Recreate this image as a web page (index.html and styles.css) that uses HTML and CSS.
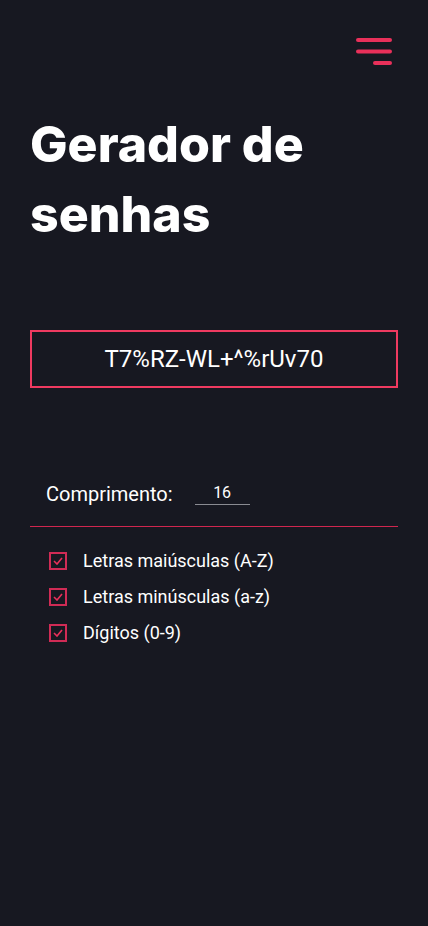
FILE: index.html
```html
<!DOCTYPE html>
<html lang="pt">
<head>
<meta charset="utf-8">
<title>Gerador de senhas</title>
<link rel="stylesheet" href="styles.css">
</head>
<body>
<div class="page">
  <header class="topbar">
    <button class="menu" aria-label="Menu">
      <svg width="36" height="27" viewBox="0 0 36 27">
        <line x1="2" y1="2" x2="34" y2="2" stroke="#e9305a" stroke-width="4" stroke-linecap="round"/>
        <line x1="2" y1="13.5" x2="34" y2="13.5" stroke="#e9305a" stroke-width="4" stroke-linecap="round"/>
        <line x1="19" y1="25" x2="34" y2="25" stroke="#e9305a" stroke-width="4" stroke-linecap="round"/>
      </svg>
    </button>
  </header>
  <h1 class="title">Gerador de senhas</h1>
  <div class="password">T7%RZ-WL+^%rUv70</div>
  <div class="length">
    <label class="length-label" for="len">Comprimento:</label>
    <input class="length-input" id="len" type="text" value="16">
  </div>
  <div class="divider"></div>
  <ul class="options">
    <li class="option"><span class="check"><svg width="10" height="8" viewBox="0 0 10 8"><path d="M1 4 L4 7 L9 1" fill="none" stroke="#e9305a" stroke-width="1.6"/></svg></span>Letras maiúsculas (A-Z)</li>
    <li class="option"><span class="check"><svg width="10" height="8" viewBox="0 0 10 8"><path d="M1 4 L4 7 L9 1" fill="none" stroke="#e9305a" stroke-width="1.6"/></svg></span>Letras minúsculas (a-z)</li>
    <li class="option"><span class="check"><svg width="10" height="8" viewBox="0 0 10 8"><path d="M1 4 L4 7 L9 1" fill="none" stroke="#e9305a" stroke-width="1.6"/></svg></span>Dígitos (0-9)</li>
  </ul>
</div>
</body>
</html>
```
FILE: styles.css
```css
html, body {
  margin: 0;
  padding: 0;
  background: #171821;
  color: #ffffff;
  font-family: Roboto, "Liberation Sans", sans-serif;
}
.page {
  width: 428px;
  min-height: 926px;
  box-sizing: border-box;
  padding: 0 30px;
}
.topbar {
  display: flex;
  justify-content: flex-end;
  padding-top: 38px;
  padding-right: 6px;
}
.menu {
  background: none;
  border: 0;
  padding: 0;
  width: 36px;
  height: 27px;
  display: block;
}
.menu svg { display: block; }
.title {
  margin: 44px 0 0 0;
  font-family: Inter, sans-serif;
  font-weight: 800;
  font-size: 50px;
  line-height: 70px;
  width: 320px;
  letter-spacing: 0;
}
.password {
  margin-top: 81px;
  height: 58px;
  box-sizing: border-box;
  border: 2px solid #ef3a60;
  display: flex;
  align-items: center;
  justify-content: center;
  font-size: 24px;
  color: #ffffff;
}
.length {
  display: flex;
  align-items: center;
  margin-top: 91px;
  padding-left: 16px;
  height: 30px;
}
.length-label {
  font-size: 20px;
  color: #ffffff;
}
.length-input {
  margin-left: 22px;
  width: 55px;
  background: transparent;
  border: 0;
  border-bottom: 1px solid #8a8b92;
  color: #ffffff;
  font-family: Roboto, sans-serif;
  font-size: 16px;
  text-align: center;
  padding: 0 0 2px 0;
  outline: none;
}
.divider {
  margin-top: 17px;
  height: 1px;
  background: #d0264f;
}
.options {
  list-style: none;
  margin: 23px 0 0 0;
  padding: 0 0 0 19px;
  display: flex;
  flex-direction: column;
  gap: 14px;
}
.option {
  display: flex;
  align-items: center;
  font-size: 18px;
  line-height: 22px;
  color: #ffffff;
}
.check {
  width: 18px;
  height: 18px;
  box-sizing: border-box;
  border: 2px solid #d02b55;
  display: flex;
  align-items: center;
  justify-content: center;
  margin-right: 16px;
}
.check svg { display: block; }
```
